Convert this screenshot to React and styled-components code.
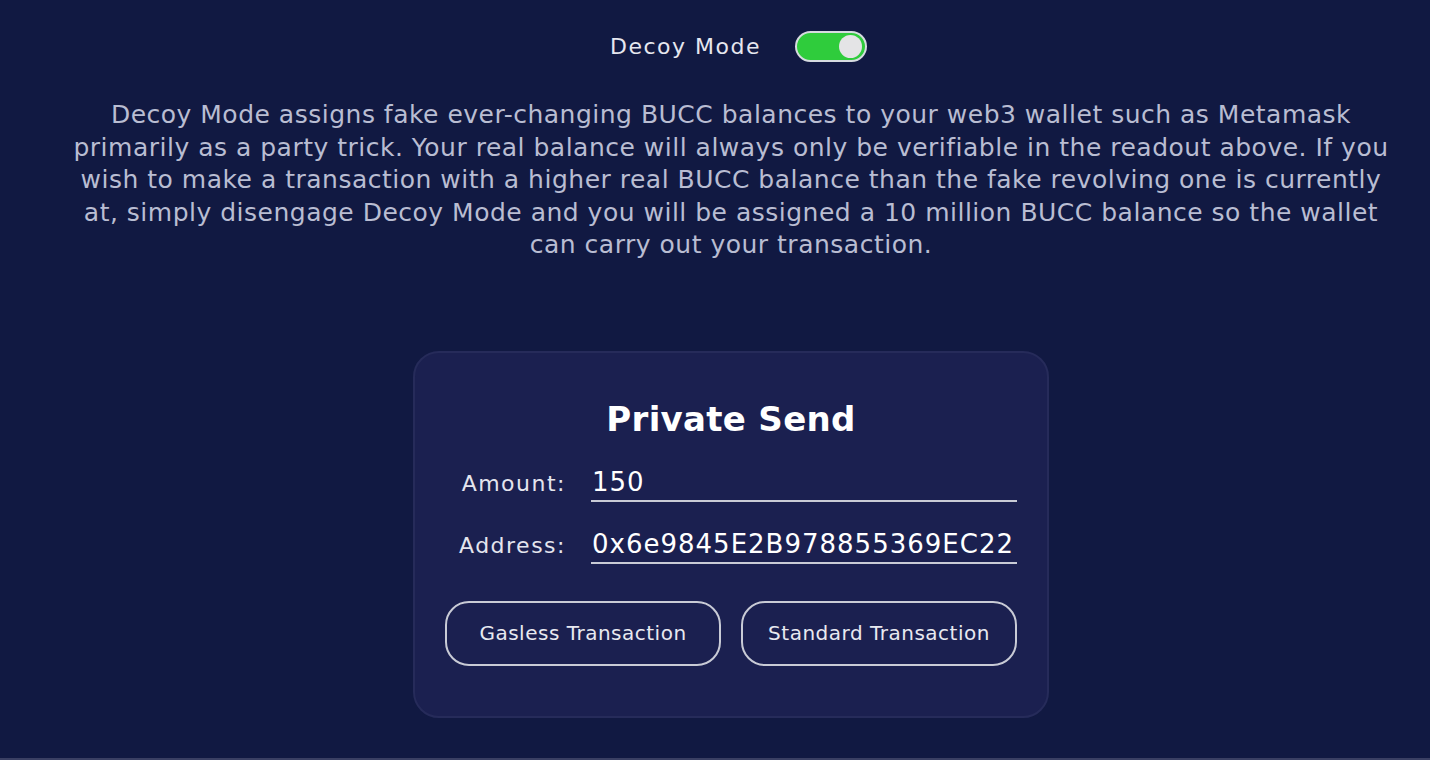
import { useState } from "react";
import styled, { createGlobalStyle } from "styled-components";

const GlobalStyle = createGlobalStyle`
  html, body {
    margin: 0;
    padding: 0;
    background: #111942;
    font-family: "DejaVu Sans", "Open Sans", sans-serif;
  }
`;

const Page = styled.main`
  min-height: 760px;
  box-sizing: border-box;
  padding: 29px 0 0 32px;
  display: flex;
  flex-direction: column;
  align-items: center;
  background: #111942;
  border-bottom: 2px solid #3a3f63;
`;

const ToggleRow = styled.div`
  display: flex;
  align-items: center;
  gap: 34px;
  height: 34px;
  margin-left: 15px;
`;

const ToggleLabel = styled.span`
  font-size: 22px;
  color: #e6e7ef;
  letter-spacing: 1.5px;
`;

const Switch = styled.button`
  width: 72px;
  height: 31px;
  border-radius: 16px;
  border: 2px solid #d6dbe0;
  background: ${(p) => (p.$on ? "#2fcc3c" : "#4a4f73")};
  padding: 0;
  display: flex;
  align-items: center;
  justify-content: ${(p) => (p.$on ? "flex-end" : "flex-start")};
  cursor: pointer;
  box-sizing: border-box;
`;

const Knob = styled.span`
  width: 23px;
  height: 23px;
  border-radius: 50%;
  background: #e4e4e6;
  margin: 0 3px;
`;

const Description = styled.p`
  margin: 36px 0 0;
  text-align: center;
  font-size: 25px;
  line-height: 32.5px;
  color: #b9bdd2;
  letter-spacing: 0.5px;
`;

const Card = styled.section`
  margin-top: 89px;
  width: 636px;
  height: 367px;
  box-sizing: border-box;
  background: #1b2050;
  border: 2px solid #262b5a;
  border-radius: 26px;
  padding: 38px 30px 0;
  display: flex;
  flex-direction: column;
  align-items: center;
`;

const Title = styled.h2`
  margin: 0;
  font-size: 34px;
  line-height: 56px;
  font-weight: 700;
  color: #ffffff;
  letter-spacing: 0.3px;
`;

const Field = styled.label`
  align-self: stretch;
  display: grid;
  grid-template-columns: 146px 1fr;
  align-items: end;
  margin-top: ${(p) => p.$top}px;
`;

const FieldName = styled.span`
  justify-self: end;
  padding-right: 25px;
  font-size: 22px;
  letter-spacing: 1.5px;
  color: #e4e5ee;
  padding-bottom: 6px;
`;

const Input = styled.input`
  width: 100%;
  box-sizing: border-box;
  background: transparent;
  border: none;
  border-bottom: 2px solid #c9cbd6;
  color: #ffffff;
  font-family: "DejaVu Sans", sans-serif;
  font-size: 26px;
  letter-spacing: 1px;
  padding: 0 0 3px 1px;
  outline: none;
`;

const Buttons = styled.div`
  align-self: stretch;
  display: grid;
  grid-template-columns: 1fr 1fr;
  gap: 20px;
  margin-top: 37px;
`;

const Action = styled.button`
  height: 65px;
  border-radius: 24px;
  border: 2px solid #c9cbd6;
  background: transparent;
  color: #e8e9f0;
  font-family: "DejaVu Sans", sans-serif;
  font-size: 20px;
  letter-spacing: 0.5px;
  cursor: pointer;
`;

export default function App() {
  const [decoy, setDecoy] = useState(true);
  const [amount, setAmount] = useState("150");
  const [address, setAddress] = useState("0x6e9845E2B978855369EC22");

  return (
    <>
      <GlobalStyle />
      <Page>
        <ToggleRow>
          <ToggleLabel>Decoy Mode</ToggleLabel>
          <Switch $on={decoy} onClick={() => setDecoy(!decoy)} aria-label="Decoy Mode">
            <Knob />
          </Switch>
        </ToggleRow>
        <Description>
          Decoy Mode assigns fake ever-changing BUCC balances to your web3 wallet such as Metamask
          <br />
          primarily as a party trick. Your real balance will always only be verifiable in the readout above. If you
          <br />
          wish to make a transaction with a higher real BUCC balance than the fake revolving one is currently
          <br />
          at, simply disengage Decoy Mode and you will be assigned a 10 million BUCC balance so the wallet
          <br />
          can carry out your transaction.
        </Description>
        <Card>
          <Title>Private Send</Title>
          <Field $top={20}>
            <FieldName>Amount:</FieldName>
            <Input value={amount} onChange={(e) => setAmount(e.target.value)} />
          </Field>
          <Field $top={27}>
            <FieldName>Address:</FieldName>
            <Input value={address} onChange={(e) => setAddress(e.target.value)} />
          </Field>
          <Buttons>
            <Action>Gasless Transaction</Action>
            <Action>Standard Transaction</Action>
          </Buttons>
        </Card>
      </Page>
    </>
  );
}
